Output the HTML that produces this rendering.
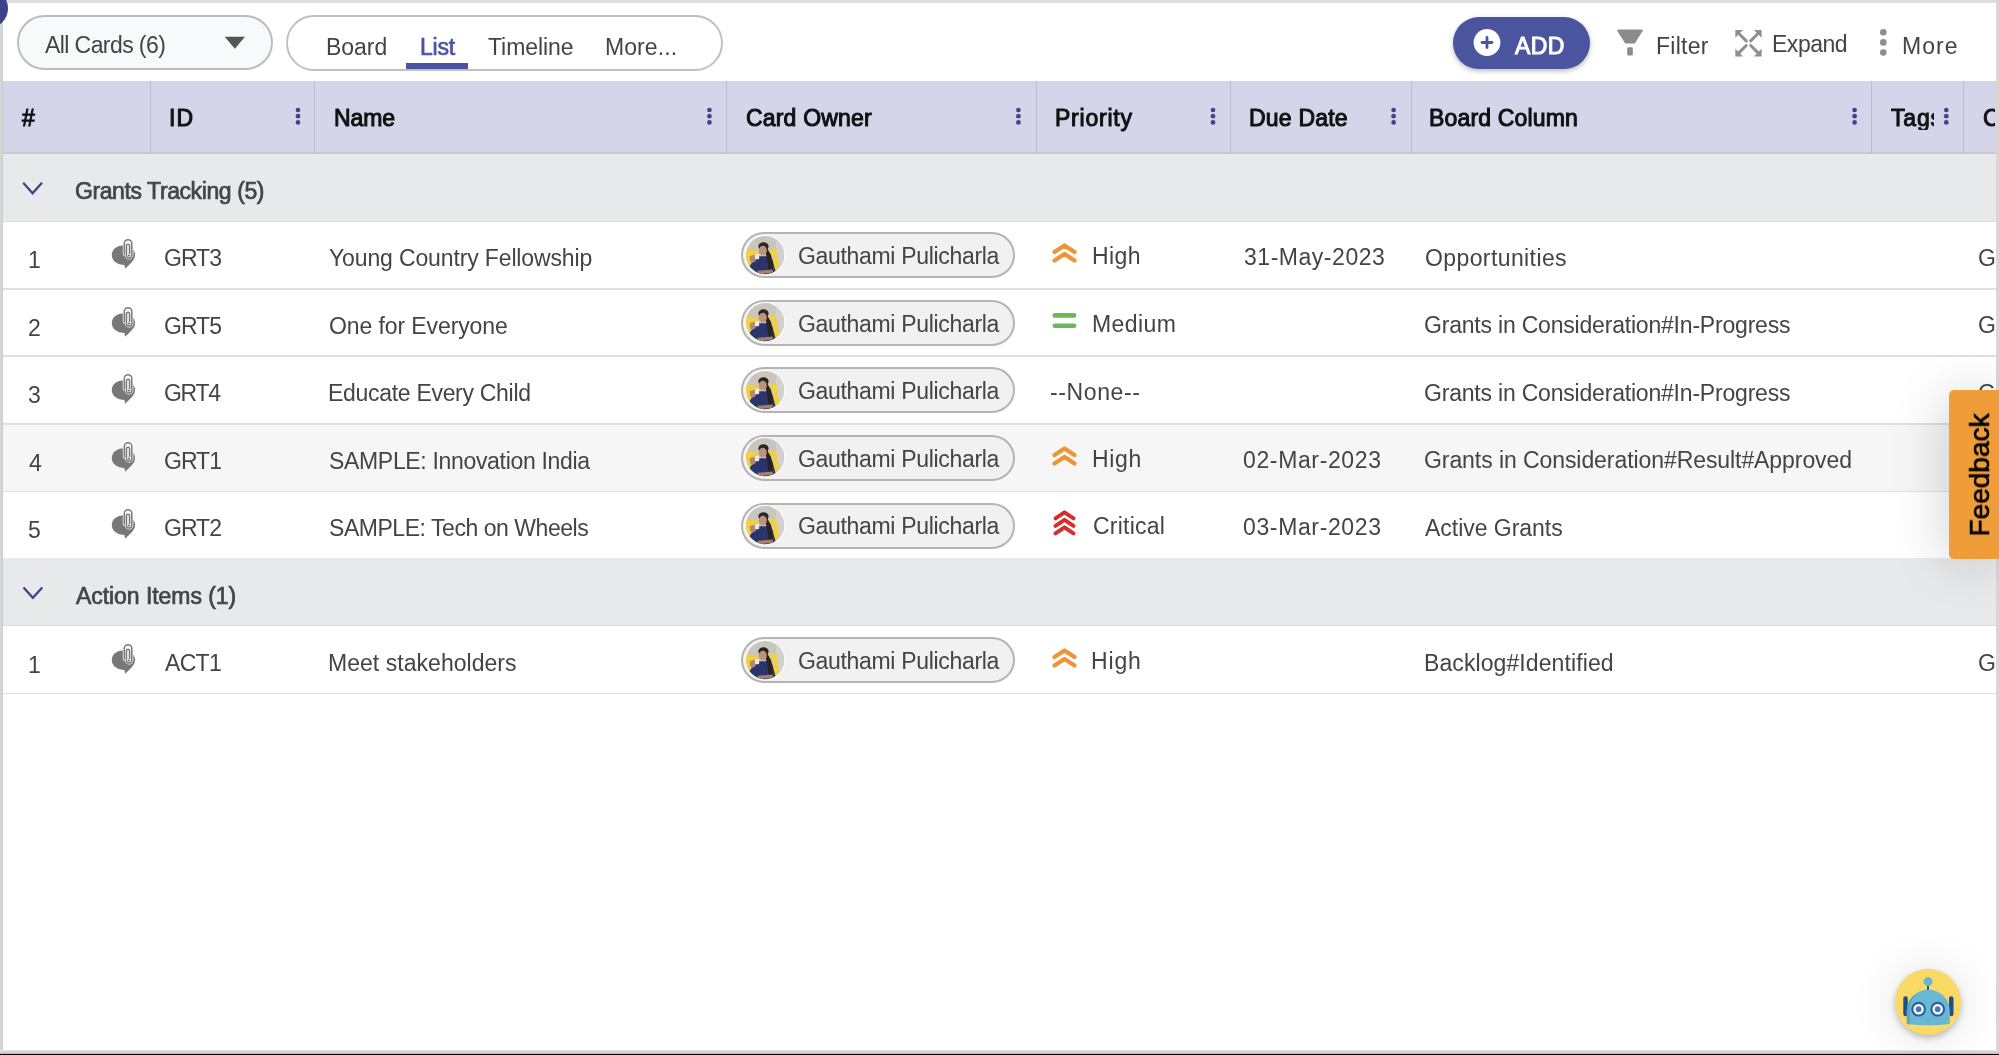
<!DOCTYPE html>
<html><head><meta charset="utf-8"><style>
html,body{margin:0;padding:0}
body{width:1999px;height:1055px;overflow:hidden;position:relative;background:#fff;font-family:"Liberation Sans",sans-serif}
.a{position:absolute;display:block}
.t{position:absolute;white-space:pre;will-change:transform}
.b{position:absolute}
.chip{position:absolute;left:740.5px;width:270.6px;height:42px;border:2px solid #b4b4b4;border-radius:24px;background:#f1f1f1;box-sizing:content-box}
.vl{position:absolute;top:81px;height:72px;width:1px;background:#b9bbd0}
.hl{position:absolute;left:3px;width:1993px;height:1.5px;background:#dfdfdf}
</style></head><body>
<!-- frame -->
<div class="b" style="left:0;top:0;width:1999px;height:3px;background:#dedede"></div>
<div class="b" style="left:0;top:0;width:2.7px;height:1055px;background:linear-gradient(90deg,#dadcdc,#c9cbcb)"></div>
<div class="b" style="left:1996px;top:0;width:3px;height:1055px;background:#d6d8d8"></div>
<div class="b" style="left:0;top:1049.5px;width:1999px;height:4.5px;background:linear-gradient(#e6e6e6,#bdbdbd)"></div>
<div class="b" style="left:0;top:1054px;width:1999px;height:1px;background:#000"></div>
<div class="b" style="left:-31.1px;top:-11.3px;width:39px;height:39px;border-radius:50%;background:#3b4287"></div>

<!-- top bar -->
<div class="b" style="left:17px;top:15px;width:252px;height:51.3px;border:2px solid #bcbcbc;border-radius:28px;background:#f8f9fb"></div>
<svg class="a" style="left:220px;top:30px" width="30" height="25" viewBox="0 0 30 25"><path d="M4.7 6.8 H25 L14.85 18.8 Z" fill="#555"/></svg>
<div class="b" style="left:286.3px;top:15.3px;width:433.2px;height:51.3px;border:2px solid #c0c0c0;border-radius:28px;background:#fff"></div>
<div class="b" style="left:406px;top:62.6px;width:62px;height:6.1px;background:#4a55a2"></div>
<div class="b" style="left:1453.3px;top:16.5px;width:136.7px;height:52.2px;border-radius:27px;background:#4b559f;box-shadow:0 2px 5px rgba(0,0,0,.28)"></div>
<svg class="a" style="left:1470px;top:25px" width="35" height="35" viewBox="0 0 35 35"><circle cx="17" cy="17.5" r="13.4" fill="#fff"/><path d="M17 12.5 V22.5 M12 17.5 H22" stroke="#4b559f" stroke-width="2.8" stroke-linecap="round"/></svg>
<svg class="a" style="left:1610px;top:25px" width="40" height="35" viewBox="0 0 40 35"><g fill="#8b8b8b"><path d="M8.4 4.4 H31.6 Q33.6 4.4 32.6 6 L24.8 18.6 H15.2 L7.4 6 Q6.4 4.4 8.4 4.4 Z"/><rect x="17.2" y="22.2" width="5.6" height="8.4" rx="1.3"/></g></svg>
<svg class="a" style="left:1730px;top:25px" width="40" height="40" viewBox="0 0 40 40"><g fill="#8f8f8f"><path d="M5.3 5 H13 L5.3 12.7 Z"/><path d="M31.6 5 H23.9 L31.6 12.7 Z"/><path d="M5.3 31.4 H13 L5.3 23.7 Z"/><path d="M31.6 31.4 H23.9 L31.6 23.7 Z"/></g><g stroke="#8f8f8f" stroke-width="3" stroke-linecap="round"><path d="M8.3 8 L16.2 15.9 M28.6 8 L20.7 15.9 M8.3 28.4 L16.2 20.5 M28.6 28.4 L20.7 20.5"/></g></svg>
<svg class="a" style="left:1870px;top:25px" width="30" height="35" viewBox="0 0 30 35"><g fill="#8d8d8d"><circle cx="13.3" cy="7.2" r="3.3"/><circle cx="13.3" cy="17.4" r="3.3"/><circle cx="13.3" cy="27.5" r="3.3"/></g></svg>

<!-- header -->
<div class="b" style="left:3px;top:81px;width:1993px;height:72px;background:#d4d5e8"></div>
<div class="b" style="left:3px;top:152.4px;width:1993px;height:1.8px;background:#c9cad0"></div>
<div class="vl" style="left:150px"></div><div class="vl" style="left:314px"></div><div class="vl" style="left:726px"></div><div class="vl" style="left:1035.6px"></div><div class="vl" style="left:1229.6px"></div><div class="vl" style="left:1410.5px"></div><div class="vl" style="left:1871px"></div><div class="vl" style="left:1963px"></div>
<svg class="a" style="left:0;top:0" width="1999" height="160"><g fill="#3d4591"><circle cx="298" cy="110" r="2.35"/><circle cx="298" cy="116.2" r="2.35"/><circle cx="298" cy="122.4" r="2.35"/><circle cx="709.4" cy="110" r="2.35"/><circle cx="709.4" cy="116.2" r="2.35"/><circle cx="709.4" cy="122.4" r="2.35"/><circle cx="1018.4" cy="110" r="2.35"/><circle cx="1018.4" cy="116.2" r="2.35"/><circle cx="1018.4" cy="122.4" r="2.35"/><circle cx="1213" cy="110" r="2.35"/><circle cx="1213" cy="116.2" r="2.35"/><circle cx="1213" cy="122.4" r="2.35"/><circle cx="1393.6" cy="110" r="2.35"/><circle cx="1393.6" cy="116.2" r="2.35"/><circle cx="1393.6" cy="122.4" r="2.35"/><circle cx="1854.6" cy="110" r="2.35"/><circle cx="1854.6" cy="116.2" r="2.35"/><circle cx="1854.6" cy="122.4" r="2.35"/><circle cx="1946.3" cy="110" r="2.35"/><circle cx="1946.3" cy="116.2" r="2.35"/><circle cx="1946.3" cy="122.4" r="2.35"/></g></svg>

<!-- groups & rows -->
<div class="b" style="left:3px;top:154px;width:1993px;height:67px;background:#e8e9eb"></div>
<div class="b" style="left:3px;top:220.5px;width:1993px;height:1.3px;background:#dadbdd"></div>
<div class="b" style="left:3px;top:423.6px;width:1993px;height:67.6px;background:#f6f6f6"></div>
<div class="hl" style="top:288px"></div><div class="hl" style="top:355.3px"></div><div class="hl" style="top:423px"></div><div class="hl" style="top:490.5px"></div>
<div class="b" style="left:3px;top:558.2px;width:1993px;height:67.8px;background:#e8e9eb"></div>
<div class="b" style="left:3px;top:625px;width:1993px;height:1.2px;background:#dadbdd"></div>
<div class="hl" style="top:692.5px"></div>
<svg class="a" style="left:15px;top:175px" width="35" height="25" viewBox="0 0 35 25"><path d="M8.2 7.8 L17.6 18.3 L27 7.8" fill="none" stroke="#3c4590" stroke-width="2.3"/></svg>
<svg class="a" style="left:15px;top:580px" width="35" height="25" viewBox="0 0 35 25"><path d="M8.5 7.5 L17.9 17.8 L27.3 7.5" fill="none" stroke="#3c4590" stroke-width="2.3"/></svg>
<svg class="a" style="left:105px;top:235.0px" width="36" height="36" viewBox="0 0 36 36">
<ellipse cx="18.4" cy="20.1" rx="11.6" ry="9.9" fill="#787878"/>
<path d="M19 28 L20.2 33.8 L27.5 26.5 Z" fill="#787878"/>
<path d="M19.3 19 V8.4 A3.75 3.75 0 0 1 26.8 8.4 V20.4 A2.7 2.7 0 0 1 21.4 20.4 V10.8 A1.6 1.6 0 0 1 24.6 10.8 V18.4" fill="none" stroke="#fff" stroke-width="3" stroke-linecap="round"/>
<path d="M19.3 19 V8.4 A3.75 3.75 0 0 1 26.8 8.4 V20.4 A2.7 2.7 0 0 1 21.4 20.4 V10.8 A1.6 1.6 0 0 1 24.6 10.8 V18.4" fill="none" stroke="#7a7a7a" stroke-width="1.5" stroke-linecap="round"/>
</svg>
<div class="chip" style="top:232.3px"></div>
<svg class="a" style="left:743.4px;top:232.7px" width="44.2" height="44.2" viewBox="-3 -3 44.2 44.2">
<circle cx="19.1" cy="19.1" r="20.4" fill="#fafafa"/>
<defs><clipPath id="c254"><circle cx="19.1" cy="19.1" r="19.1"/></clipPath></defs>
<g clip-path="url(#c254)">
<rect x="0" y="0" width="38.2" height="38.2" fill="#c9c6c0"/>
<rect x="30" y="0" width="9" height="38.2" fill="#d2d1ce"/>
<path d="M-1 13.2 L12.4 14.7 L11.9 20.3 L6.4 20.3 L3.8 31 L-1 27 Z" fill="#f1d23c"/>
<path d="M20.5 14.3 L29.9 12.2 L33.2 31.4 L29 35.5 L26.4 18.6 Z" fill="#f1d23c"/>
<path d="M7.7 23.7 L12.8 20.3 L20.5 20.3 L26.4 23.7 L29.5 35 L24 40 L10 40 L3.4 33 L3.4 30.5 Z" fill="#2a356c"/>
<path d="M20.3 10 L22.4 14.5 L24.8 18.6 L26.8 26 L26.4 33.4 L22.8 34.2 L20.8 22 L19.4 16.5 Z" fill="#2b2320"/>
<ellipse cx="17.5" cy="10.4" rx="5.1" ry="4.2" fill="#2b2320"/>
<ellipse cx="16.8" cy="14.6" rx="4" ry="4.9" fill="#bf937a"/>
<path d="M3.8 20 L9.4 18.6 L9.8 25 L6 27 L4 25 Z" fill="#b4896f"/>
<rect x="8.9" y="18.1" width="4.3" height="5.1" rx="1" fill="#ece8e3"/>
<path d="M11.5 34.8 L26.4 33.5 L27.3 36.5 L12.8 38.5 Z" fill="#a88069"/>
</g></svg>
<svg class="a" style="left:1040px;top:230.0px" width="50" height="45" viewBox="0 0 50 45">
<path d="M14.5 22 L24.5 15.5 L34.5 22 M14.5 30.5 L24.5 24 L34.5 30.5" fill="none" stroke="#ec9437" stroke-width="4.3" stroke-linecap="round" stroke-linejoin="round"/></svg>
<svg class="a" style="left:105px;top:302.6px" width="36" height="36" viewBox="0 0 36 36">
<ellipse cx="18.4" cy="20.1" rx="11.6" ry="9.9" fill="#787878"/>
<path d="M19 28 L20.2 33.8 L27.5 26.5 Z" fill="#787878"/>
<path d="M19.3 19 V8.4 A3.75 3.75 0 0 1 26.8 8.4 V20.4 A2.7 2.7 0 0 1 21.4 20.4 V10.8 A1.6 1.6 0 0 1 24.6 10.8 V18.4" fill="none" stroke="#fff" stroke-width="3" stroke-linecap="round"/>
<path d="M19.3 19 V8.4 A3.75 3.75 0 0 1 26.8 8.4 V20.4 A2.7 2.7 0 0 1 21.4 20.4 V10.8 A1.6 1.6 0 0 1 24.6 10.8 V18.4" fill="none" stroke="#7a7a7a" stroke-width="1.5" stroke-linecap="round"/>
</svg>
<div class="chip" style="top:299.9px"></div>
<svg class="a" style="left:743.4px;top:300.3px" width="44.2" height="44.2" viewBox="-3 -3 44.2 44.2">
<circle cx="19.1" cy="19.1" r="20.4" fill="#fafafa"/>
<defs><clipPath id="c322"><circle cx="19.1" cy="19.1" r="19.1"/></clipPath></defs>
<g clip-path="url(#c322)">
<rect x="0" y="0" width="38.2" height="38.2" fill="#c9c6c0"/>
<rect x="30" y="0" width="9" height="38.2" fill="#d2d1ce"/>
<path d="M-1 13.2 L12.4 14.7 L11.9 20.3 L6.4 20.3 L3.8 31 L-1 27 Z" fill="#f1d23c"/>
<path d="M20.5 14.3 L29.9 12.2 L33.2 31.4 L29 35.5 L26.4 18.6 Z" fill="#f1d23c"/>
<path d="M7.7 23.7 L12.8 20.3 L20.5 20.3 L26.4 23.7 L29.5 35 L24 40 L10 40 L3.4 33 L3.4 30.5 Z" fill="#2a356c"/>
<path d="M20.3 10 L22.4 14.5 L24.8 18.6 L26.8 26 L26.4 33.4 L22.8 34.2 L20.8 22 L19.4 16.5 Z" fill="#2b2320"/>
<ellipse cx="17.5" cy="10.4" rx="5.1" ry="4.2" fill="#2b2320"/>
<ellipse cx="16.8" cy="14.6" rx="4" ry="4.9" fill="#bf937a"/>
<path d="M3.8 20 L9.4 18.6 L9.8 25 L6 27 L4 25 Z" fill="#b4896f"/>
<rect x="8.9" y="18.1" width="4.3" height="5.1" rx="1" fill="#ece8e3"/>
<path d="M11.5 34.8 L26.4 33.5 L27.3 36.5 L12.8 38.5 Z" fill="#a88069"/>
</g></svg>
<svg class="a" style="left:1040px;top:298.6px" width="50" height="45" viewBox="0 0 50 45">
<path d="M14.8 16.4 H34.1 M14.8 26.7 H34.1" fill="none" stroke="#68b957" stroke-width="4.6" stroke-linecap="round"/></svg>
<svg class="a" style="left:105px;top:370.0px" width="36" height="36" viewBox="0 0 36 36">
<ellipse cx="18.4" cy="20.1" rx="11.6" ry="9.9" fill="#787878"/>
<path d="M19 28 L20.2 33.8 L27.5 26.5 Z" fill="#787878"/>
<path d="M19.3 19 V8.4 A3.75 3.75 0 0 1 26.8 8.4 V20.4 A2.7 2.7 0 0 1 21.4 20.4 V10.8 A1.6 1.6 0 0 1 24.6 10.8 V18.4" fill="none" stroke="#fff" stroke-width="3" stroke-linecap="round"/>
<path d="M19.3 19 V8.4 A3.75 3.75 0 0 1 26.8 8.4 V20.4 A2.7 2.7 0 0 1 21.4 20.4 V10.8 A1.6 1.6 0 0 1 24.6 10.8 V18.4" fill="none" stroke="#7a7a7a" stroke-width="1.5" stroke-linecap="round"/>
</svg>
<div class="chip" style="top:367.3px"></div>
<svg class="a" style="left:743.4px;top:367.7px" width="44.2" height="44.2" viewBox="-3 -3 44.2 44.2">
<circle cx="19.1" cy="19.1" r="20.4" fill="#fafafa"/>
<defs><clipPath id="c389"><circle cx="19.1" cy="19.1" r="19.1"/></clipPath></defs>
<g clip-path="url(#c389)">
<rect x="0" y="0" width="38.2" height="38.2" fill="#c9c6c0"/>
<rect x="30" y="0" width="9" height="38.2" fill="#d2d1ce"/>
<path d="M-1 13.2 L12.4 14.7 L11.9 20.3 L6.4 20.3 L3.8 31 L-1 27 Z" fill="#f1d23c"/>
<path d="M20.5 14.3 L29.9 12.2 L33.2 31.4 L29 35.5 L26.4 18.6 Z" fill="#f1d23c"/>
<path d="M7.7 23.7 L12.8 20.3 L20.5 20.3 L26.4 23.7 L29.5 35 L24 40 L10 40 L3.4 33 L3.4 30.5 Z" fill="#2a356c"/>
<path d="M20.3 10 L22.4 14.5 L24.8 18.6 L26.8 26 L26.4 33.4 L22.8 34.2 L20.8 22 L19.4 16.5 Z" fill="#2b2320"/>
<ellipse cx="17.5" cy="10.4" rx="5.1" ry="4.2" fill="#2b2320"/>
<ellipse cx="16.8" cy="14.6" rx="4" ry="4.9" fill="#bf937a"/>
<path d="M3.8 20 L9.4 18.6 L9.8 25 L6 27 L4 25 Z" fill="#b4896f"/>
<rect x="8.9" y="18.1" width="4.3" height="5.1" rx="1" fill="#ece8e3"/>
<path d="M11.5 34.8 L26.4 33.5 L27.3 36.5 L12.8 38.5 Z" fill="#a88069"/>
</g></svg>

<svg class="a" style="left:105px;top:437.6px" width="36" height="36" viewBox="0 0 36 36">
<ellipse cx="18.4" cy="20.1" rx="11.6" ry="9.9" fill="#787878"/>
<path d="M19 28 L20.2 33.8 L27.5 26.5 Z" fill="#787878"/>
<path d="M19.3 19 V8.4 A3.75 3.75 0 0 1 26.8 8.4 V20.4 A2.7 2.7 0 0 1 21.4 20.4 V10.8 A1.6 1.6 0 0 1 24.6 10.8 V18.4" fill="none" stroke="#fff" stroke-width="3" stroke-linecap="round"/>
<path d="M19.3 19 V8.4 A3.75 3.75 0 0 1 26.8 8.4 V20.4 A2.7 2.7 0 0 1 21.4 20.4 V10.8 A1.6 1.6 0 0 1 24.6 10.8 V18.4" fill="none" stroke="#7a7a7a" stroke-width="1.5" stroke-linecap="round"/>
</svg>
<div class="chip" style="top:434.9px"></div>
<svg class="a" style="left:743.4px;top:435.3px" width="44.2" height="44.2" viewBox="-3 -3 44.2 44.2">
<circle cx="19.1" cy="19.1" r="20.4" fill="#fafafa"/>
<defs><clipPath id="c457"><circle cx="19.1" cy="19.1" r="19.1"/></clipPath></defs>
<g clip-path="url(#c457)">
<rect x="0" y="0" width="38.2" height="38.2" fill="#c9c6c0"/>
<rect x="30" y="0" width="9" height="38.2" fill="#d2d1ce"/>
<path d="M-1 13.2 L12.4 14.7 L11.9 20.3 L6.4 20.3 L3.8 31 L-1 27 Z" fill="#f1d23c"/>
<path d="M20.5 14.3 L29.9 12.2 L33.2 31.4 L29 35.5 L26.4 18.6 Z" fill="#f1d23c"/>
<path d="M7.7 23.7 L12.8 20.3 L20.5 20.3 L26.4 23.7 L29.5 35 L24 40 L10 40 L3.4 33 L3.4 30.5 Z" fill="#2a356c"/>
<path d="M20.3 10 L22.4 14.5 L24.8 18.6 L26.8 26 L26.4 33.4 L22.8 34.2 L20.8 22 L19.4 16.5 Z" fill="#2b2320"/>
<ellipse cx="17.5" cy="10.4" rx="5.1" ry="4.2" fill="#2b2320"/>
<ellipse cx="16.8" cy="14.6" rx="4" ry="4.9" fill="#bf937a"/>
<path d="M3.8 20 L9.4 18.6 L9.8 25 L6 27 L4 25 Z" fill="#b4896f"/>
<rect x="8.9" y="18.1" width="4.3" height="5.1" rx="1" fill="#ece8e3"/>
<path d="M11.5 34.8 L26.4 33.5 L27.3 36.5 L12.8 38.5 Z" fill="#a88069"/>
</g></svg>
<svg class="a" style="left:1040px;top:432.6px" width="50" height="45" viewBox="0 0 50 45">
<path d="M14.5 22 L24.5 15.5 L34.5 22 M14.5 30.5 L24.5 24 L34.5 30.5" fill="none" stroke="#ec9437" stroke-width="4.3" stroke-linecap="round" stroke-linejoin="round"/></svg>
<svg class="a" style="left:105px;top:505.2px" width="36" height="36" viewBox="0 0 36 36">
<ellipse cx="18.4" cy="20.1" rx="11.6" ry="9.9" fill="#787878"/>
<path d="M19 28 L20.2 33.8 L27.5 26.5 Z" fill="#787878"/>
<path d="M19.3 19 V8.4 A3.75 3.75 0 0 1 26.8 8.4 V20.4 A2.7 2.7 0 0 1 21.4 20.4 V10.8 A1.6 1.6 0 0 1 24.6 10.8 V18.4" fill="none" stroke="#fff" stroke-width="3" stroke-linecap="round"/>
<path d="M19.3 19 V8.4 A3.75 3.75 0 0 1 26.8 8.4 V20.4 A2.7 2.7 0 0 1 21.4 20.4 V10.8 A1.6 1.6 0 0 1 24.6 10.8 V18.4" fill="none" stroke="#7a7a7a" stroke-width="1.5" stroke-linecap="round"/>
</svg>
<div class="chip" style="top:502.5px"></div>
<svg class="a" style="left:743.4px;top:502.9px" width="44.2" height="44.2" viewBox="-3 -3 44.2 44.2">
<circle cx="19.1" cy="19.1" r="20.4" fill="#fafafa"/>
<defs><clipPath id="c525"><circle cx="19.1" cy="19.1" r="19.1"/></clipPath></defs>
<g clip-path="url(#c525)">
<rect x="0" y="0" width="38.2" height="38.2" fill="#c9c6c0"/>
<rect x="30" y="0" width="9" height="38.2" fill="#d2d1ce"/>
<path d="M-1 13.2 L12.4 14.7 L11.9 20.3 L6.4 20.3 L3.8 31 L-1 27 Z" fill="#f1d23c"/>
<path d="M20.5 14.3 L29.9 12.2 L33.2 31.4 L29 35.5 L26.4 18.6 Z" fill="#f1d23c"/>
<path d="M7.7 23.7 L12.8 20.3 L20.5 20.3 L26.4 23.7 L29.5 35 L24 40 L10 40 L3.4 33 L3.4 30.5 Z" fill="#2a356c"/>
<path d="M20.3 10 L22.4 14.5 L24.8 18.6 L26.8 26 L26.4 33.4 L22.8 34.2 L20.8 22 L19.4 16.5 Z" fill="#2b2320"/>
<ellipse cx="17.5" cy="10.4" rx="5.1" ry="4.2" fill="#2b2320"/>
<ellipse cx="16.8" cy="14.6" rx="4" ry="4.9" fill="#bf937a"/>
<path d="M3.8 20 L9.4 18.6 L9.8 25 L6 27 L4 25 Z" fill="#b4896f"/>
<rect x="8.9" y="18.1" width="4.3" height="5.1" rx="1" fill="#ece8e3"/>
<path d="M11.5 34.8 L26.4 33.5 L27.3 36.5 L12.8 38.5 Z" fill="#a88069"/>
</g></svg>
<svg class="a" style="left:1040px;top:501.2px" width="50" height="45" viewBox="0 0 50 45">
<path d="M15.5 17.3 L24.5 11.3 L33.5 17.3 M15.5 24.8 L24.5 18.8 L33.5 24.8 M15.5 32.3 L24.5 26.3 L33.5 32.3" fill="none" stroke="#d2302e" stroke-width="4" stroke-linecap="round" stroke-linejoin="round"/></svg>
<svg class="a" style="left:105px;top:640.0px" width="36" height="36" viewBox="0 0 36 36">
<ellipse cx="18.4" cy="20.1" rx="11.6" ry="9.9" fill="#787878"/>
<path d="M19 28 L20.2 33.8 L27.5 26.5 Z" fill="#787878"/>
<path d="M19.3 19 V8.4 A3.75 3.75 0 0 1 26.8 8.4 V20.4 A2.7 2.7 0 0 1 21.4 20.4 V10.8 A1.6 1.6 0 0 1 24.6 10.8 V18.4" fill="none" stroke="#fff" stroke-width="3" stroke-linecap="round"/>
<path d="M19.3 19 V8.4 A3.75 3.75 0 0 1 26.8 8.4 V20.4 A2.7 2.7 0 0 1 21.4 20.4 V10.8 A1.6 1.6 0 0 1 24.6 10.8 V18.4" fill="none" stroke="#7a7a7a" stroke-width="1.5" stroke-linecap="round"/>
</svg>
<div class="chip" style="top:637.3px"></div>
<svg class="a" style="left:743.4px;top:637.7px" width="44.2" height="44.2" viewBox="-3 -3 44.2 44.2">
<circle cx="19.1" cy="19.1" r="20.4" fill="#fafafa"/>
<defs><clipPath id="c659"><circle cx="19.1" cy="19.1" r="19.1"/></clipPath></defs>
<g clip-path="url(#c659)">
<rect x="0" y="0" width="38.2" height="38.2" fill="#c9c6c0"/>
<rect x="30" y="0" width="9" height="38.2" fill="#d2d1ce"/>
<path d="M-1 13.2 L12.4 14.7 L11.9 20.3 L6.4 20.3 L3.8 31 L-1 27 Z" fill="#f1d23c"/>
<path d="M20.5 14.3 L29.9 12.2 L33.2 31.4 L29 35.5 L26.4 18.6 Z" fill="#f1d23c"/>
<path d="M7.7 23.7 L12.8 20.3 L20.5 20.3 L26.4 23.7 L29.5 35 L24 40 L10 40 L3.4 33 L3.4 30.5 Z" fill="#2a356c"/>
<path d="M20.3 10 L22.4 14.5 L24.8 18.6 L26.8 26 L26.4 33.4 L22.8 34.2 L20.8 22 L19.4 16.5 Z" fill="#2b2320"/>
<ellipse cx="17.5" cy="10.4" rx="5.1" ry="4.2" fill="#2b2320"/>
<ellipse cx="16.8" cy="14.6" rx="4" ry="4.9" fill="#bf937a"/>
<path d="M3.8 20 L9.4 18.6 L9.8 25 L6 27 L4 25 Z" fill="#b4896f"/>
<rect x="8.9" y="18.1" width="4.3" height="5.1" rx="1" fill="#ece8e3"/>
<path d="M11.5 34.8 L26.4 33.5 L27.3 36.5 L12.8 38.5 Z" fill="#a88069"/>
</g></svg>
<svg class="a" style="left:1040px;top:635.0px" width="50" height="45" viewBox="0 0 50 45">
<path d="M14.5 22 L24.5 15.5 L34.5 22 M14.5 30.5 L24.5 24 L34.5 30.5" fill="none" stroke="#ec9437" stroke-width="4.3" stroke-linecap="round" stroke-linejoin="round"/></svg>

<div class="t" style="left:45.00px;top:33.50px;font-size:23px;font-weight:400;line-height:23px;letter-spacing:-0.583px;color:#444">All Cards (6)</div>
<div class="t" style="left:326.40px;top:36.20px;font-size:23px;font-weight:400;line-height:23px;letter-spacing:-0.025px;color:#444">Board</div>
<div class="t" style="left:419.70px;top:36.20px;font-size:23px;font-weight:400;-webkit-text-stroke:0.7px #4a55a2;line-height:23px;letter-spacing:-0.233px;color:#4a55a2">List</div>
<div class="t" style="left:488.30px;top:36.20px;font-size:23px;font-weight:400;line-height:23px;letter-spacing:-0.086px;color:#444">Timeline</div>
<div class="t" style="left:604.50px;top:36.20px;font-size:23px;font-weight:400;line-height:23px;letter-spacing:0.083px;color:#444">More...</div>
<div class="t" style="left:1514.50px;top:34.90px;font-size:23px;font-weight:400;-webkit-text-stroke:1px #fff;line-height:23px;letter-spacing:0.350px;color:#fff">ADD</div>
<div class="t" style="left:1655.80px;top:34.70px;font-size:23px;font-weight:400;line-height:23px;letter-spacing:0.280px;color:#444">Filter</div>
<div class="t" style="left:1772.40px;top:32.80px;font-size:23px;font-weight:400;line-height:23px;letter-spacing:-0.480px;color:#444">Expand</div>
<div class="t" style="left:1901.50px;top:34.60px;font-size:23px;font-weight:400;line-height:23px;letter-spacing:1.033px;color:#444">More</div>
<div class="t" style="left:21.90px;top:107.00px;font-size:23px;font-weight:400;-webkit-text-stroke:1px #111;line-height:23px;letter-spacing:0.000px;color:#111">#</div>
<div class="t" style="left:169.00px;top:107.00px;font-size:23px;font-weight:400;-webkit-text-stroke:1px #111;line-height:23px;letter-spacing:1.000px;color:#111">ID</div>
<div class="t" style="left:334.00px;top:107.00px;font-size:23px;font-weight:400;-webkit-text-stroke:1px #111;line-height:23px;letter-spacing:-0.100px;color:#111">Name</div>
<div class="t" style="left:746.00px;top:107.00px;font-size:23px;font-weight:400;-webkit-text-stroke:1px #111;line-height:23px;letter-spacing:0.178px;color:#111">Card Owner</div>
<div class="t" style="left:1054.60px;top:107.00px;font-size:23px;font-weight:400;-webkit-text-stroke:1px #111;line-height:23px;letter-spacing:0.771px;color:#111">Priority</div>
<div class="t" style="left:1248.60px;top:107.00px;font-size:23px;font-weight:400;-webkit-text-stroke:1px #111;line-height:23px;letter-spacing:0.200px;color:#111">Due Date</div>
<div class="t" style="left:1429.00px;top:107.00px;font-size:23px;font-weight:400;-webkit-text-stroke:1px #111;line-height:23px;letter-spacing:0.164px;color:#111">Board Column</div>
<div class="t" style="left:1890.50px;top:107.00px;font-size:23px;font-weight:400;-webkit-text-stroke:1px #111;line-height:23px;letter-spacing:0.833px;color:#111;width:42.5px;overflow:hidden">Tags</div>
<div class="t" style="left:1983.00px;top:107.00px;font-size:23px;font-weight:400;-webkit-text-stroke:1px #111;line-height:23px;letter-spacing:0.000px;color:#111;width:12.0px;overflow:hidden">C</div>
<div class="t" style="left:74.80px;top:179.80px;font-size:23px;font-weight:400;-webkit-text-stroke:0.7px #444;line-height:23px;letter-spacing:-0.411px;color:#444">Grants Tracking (5)</div>
<div class="t" style="left:75.80px;top:584.80px;font-size:23px;font-weight:400;-webkit-text-stroke:0.7px #444;line-height:23px;letter-spacing:-0.060px;color:#444">Action Items (1)</div>
<div class="t" style="left:27.70px;top:248.90px;font-size:23px;font-weight:400;line-height:23px;letter-spacing:0.000px;color:#444">1</div>
<div class="t" style="left:164.20px;top:247.00px;font-size:23px;font-weight:400;line-height:23px;letter-spacing:-1.000px;color:#444">GRT3</div>
<div class="t" style="left:328.80px;top:247.00px;font-size:23px;font-weight:400;line-height:23px;letter-spacing:-0.135px;color:#444">Young Country Fellowship</div>
<div class="t" style="left:797.80px;top:245.00px;font-size:23px;font-weight:400;line-height:23px;letter-spacing:-0.322px;color:#444">Gauthami Pulicharla</div>
<div class="t" style="left:1091.70px;top:245.00px;font-size:23px;font-weight:400;line-height:23px;letter-spacing:0.433px;color:#444">High</div>
<div class="t" style="left:1244.00px;top:246.00px;font-size:23px;font-weight:400;line-height:23px;letter-spacing:0.530px;color:#444">31-May-2023</div>
<div class="t" style="left:1424.50px;top:246.60px;font-size:23px;font-weight:400;line-height:23px;letter-spacing:0.400px;color:#444">Opportunities</div>
<div class="t" style="left:28.20px;top:316.50px;font-size:23px;font-weight:400;line-height:23px;letter-spacing:0.000px;color:#444">2</div>
<div class="t" style="left:164.20px;top:314.60px;font-size:23px;font-weight:400;line-height:23px;letter-spacing:-1.000px;color:#444">GRT5</div>
<div class="t" style="left:328.90px;top:314.60px;font-size:23px;font-weight:400;line-height:23px;letter-spacing:-0.100px;color:#444">One for Everyone</div>
<div class="t" style="left:797.80px;top:312.60px;font-size:23px;font-weight:400;line-height:23px;letter-spacing:-0.322px;color:#444">Gauthami Pulicharla</div>
<div class="t" style="left:1091.50px;top:312.60px;font-size:23px;font-weight:400;line-height:23px;letter-spacing:0.420px;color:#444">Medium</div>
<div class="t" style="left:1424.40px;top:314.20px;font-size:23px;font-weight:400;line-height:23px;letter-spacing:-0.200px;color:#444">Grants in Consideration#In-Progress</div>
<div class="t" style="left:28.20px;top:383.90px;font-size:23px;font-weight:400;line-height:23px;letter-spacing:0.000px;color:#444">3</div>
<div class="t" style="left:164.20px;top:382.00px;font-size:23px;font-weight:400;line-height:23px;letter-spacing:-1.333px;color:#444">GRT4</div>
<div class="t" style="left:327.90px;top:382.00px;font-size:23px;font-weight:400;line-height:23px;letter-spacing:-0.300px;color:#444">Educate Every Child</div>
<div class="t" style="left:797.80px;top:380.00px;font-size:23px;font-weight:400;line-height:23px;letter-spacing:-0.322px;color:#444">Gauthami Pulicharla</div>
<div class="t" style="left:1049.50px;top:381.00px;font-size:23px;font-weight:400;line-height:23px;letter-spacing:0.614px;color:#444">--None--</div>
<div class="t" style="left:1424.40px;top:381.60px;font-size:23px;font-weight:400;line-height:23px;letter-spacing:-0.200px;color:#444">Grants in Consideration#In-Progress</div>
<div class="t" style="left:28.70px;top:451.50px;font-size:23px;font-weight:400;line-height:23px;letter-spacing:0.000px;color:#444">4</div>
<div class="t" style="left:164.20px;top:449.60px;font-size:23px;font-weight:400;line-height:23px;letter-spacing:-1.000px;color:#444">GRT1</div>
<div class="t" style="left:328.90px;top:449.60px;font-size:23px;font-weight:400;line-height:23px;letter-spacing:-0.326px;color:#444">SAMPLE: Innovation India</div>
<div class="t" style="left:797.80px;top:447.60px;font-size:23px;font-weight:400;line-height:23px;letter-spacing:-0.322px;color:#444">Gauthami Pulicharla</div>
<div class="t" style="left:1091.50px;top:447.60px;font-size:23px;font-weight:400;line-height:23px;letter-spacing:0.667px;color:#444">High</div>
<div class="t" style="left:1242.70px;top:448.60px;font-size:23px;font-weight:400;line-height:23px;letter-spacing:0.630px;color:#444">02-Mar-2023</div>
<div class="t" style="left:1424.30px;top:449.20px;font-size:23px;font-weight:400;line-height:23px;letter-spacing:-0.074px;color:#444">Grants in Consideration#Result#Approved</div>
<div class="t" style="left:28.20px;top:519.10px;font-size:23px;font-weight:400;line-height:23px;letter-spacing:0.000px;color:#444">5</div>
<div class="t" style="left:164.20px;top:517.20px;font-size:23px;font-weight:400;line-height:23px;letter-spacing:-1.000px;color:#444">GRT2</div>
<div class="t" style="left:328.90px;top:517.20px;font-size:23px;font-weight:400;line-height:23px;letter-spacing:-0.457px;color:#444">SAMPLE: Tech on Wheels</div>
<div class="t" style="left:797.80px;top:515.20px;font-size:23px;font-weight:400;line-height:23px;letter-spacing:-0.322px;color:#444">Gauthami Pulicharla</div>
<div class="t" style="left:1092.50px;top:515.20px;font-size:23px;font-weight:400;line-height:23px;letter-spacing:0.214px;color:#444">Critical</div>
<div class="t" style="left:1242.70px;top:516.20px;font-size:23px;font-weight:400;line-height:23px;letter-spacing:0.630px;color:#444">03-Mar-2023</div>
<div class="t" style="left:1425.40px;top:516.80px;font-size:23px;font-weight:400;line-height:23px;letter-spacing:-0.033px;color:#444">Active Grants</div>
<div class="t" style="left:27.70px;top:653.90px;font-size:23px;font-weight:400;line-height:23px;letter-spacing:0.000px;color:#444">1</div>
<div class="t" style="left:165.20px;top:652.00px;font-size:23px;font-weight:400;line-height:23px;letter-spacing:-0.667px;color:#444">ACT1</div>
<div class="t" style="left:328.00px;top:652.00px;font-size:23px;font-weight:400;line-height:23px;letter-spacing:0.038px;color:#444">Meet stakeholders</div>
<div class="t" style="left:797.80px;top:650.00px;font-size:23px;font-weight:400;line-height:23px;letter-spacing:-0.322px;color:#444">Gauthami Pulicharla</div>
<div class="t" style="left:1091.00px;top:650.00px;font-size:23px;font-weight:400;line-height:23px;letter-spacing:0.867px;color:#444">High</div>
<div class="t" style="left:1424.40px;top:651.60px;font-size:23px;font-weight:400;line-height:23px;letter-spacing:0.094px;color:#444">Backlog#Identified</div>

<!-- last col clipped G -->
<div class="t" style="left:1977.5px;top:246.5px;width:18.5px;overflow:hidden;font-size:23px;line-height:23px;color:#444">G...</div>
<div class="t" style="left:1977.5px;top:314px;width:18.5px;overflow:hidden;font-size:23px;line-height:23px;color:#444">G...</div>
<div class="t" style="left:1977.5px;top:381.5px;width:18.5px;overflow:hidden;font-size:23px;line-height:23px;color:#444">G...</div>
<div class="t" style="left:1977.5px;top:651.5px;width:18.5px;overflow:hidden;font-size:23px;line-height:23px;color:#444">G...</div>

<!-- feedback tab -->
<div class="b" style="left:1948.6px;top:390px;width:60px;height:168.5px;background:#f09c38;border-radius:5px 0 0 5px;box-shadow:-8px 4px 50px rgba(0,0,0,.15)"></div>
<div class="t" style="left:1979.5px;top:474.8px;font-size:28px;font-weight:400;-webkit-text-stroke:0.7px #000;line-height:28px;color:#000;transform:translate(-50%,-50%) rotate(-90deg)">Feedback</div>
<div class="b" style="left:1996px;top:558px;width:3px;height:0px"></div>

<!-- bot -->
<div class="b" style="left:1895px;top:969px;width:66px;height:66px;border-radius:50%;background:#fad967;box-shadow:0 3px 6px rgba(0,0,0,.24),0 2px 50px rgba(0,0,0,.12)"></div>
<svg class="a" style="left:1895px;top:969px" width="66" height="66" viewBox="0 0 66 66">
<line x1="33" y1="13" x2="33" y2="22" stroke="#24487f" stroke-width="2"/>
<circle cx="33" cy="12.6" r="4.5" fill="#65b7cf"/>
<rect x="8.3" y="27.3" width="4.5" height="20" rx="2.2" fill="#244b8b"/>
<rect x="54" y="27.3" width="4.5" height="20" rx="2.2" fill="#244b8b"/>
<path d="M11.8 55 V42 A21.5 21.5 0 0 1 54.8 42 V55 Q33 57.5 11.8 55 Z" fill="#66b9d0"/>
<path d="M11.8 55 V42 A21.5 21.5 0 0 1 22 24 A23 23 0 0 0 15 42 V55.4 Z" fill="#5aa6c4"/>
<circle cx="23.6" cy="40.2" r="6.3" fill="#fff" stroke="#2f5da6" stroke-width="2.2"/><circle cx="23.6" cy="40.2" r="2.9" fill="#3f7cbb"/>
<circle cx="42.7" cy="40.2" r="6.3" fill="#fff" stroke="#2f5da6" stroke-width="2.2"/><circle cx="42.7" cy="40.2" r="2.9" fill="#3f7cbb"/>
</svg>
</body></html>
